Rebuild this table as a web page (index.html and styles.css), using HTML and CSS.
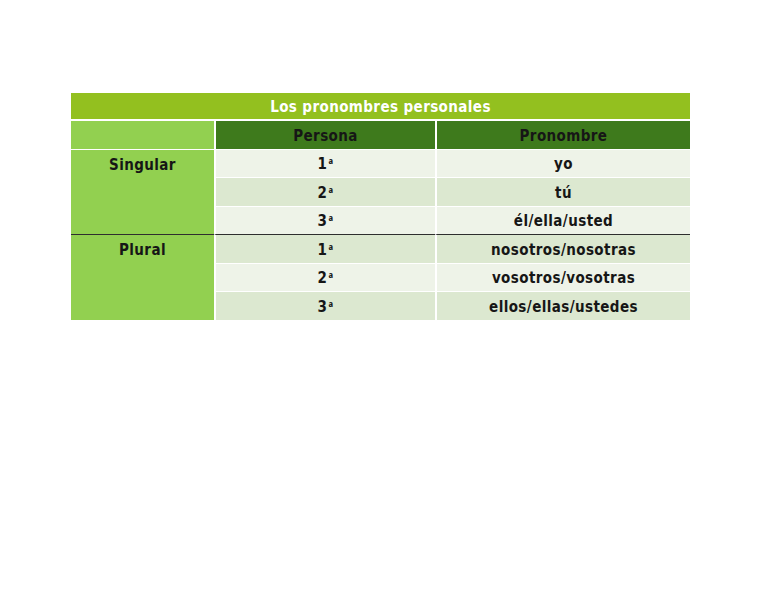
FILE: index.html
```html
<!DOCTYPE html>
<html lang="es">
<head>
<meta charset="utf-8">
<title>Los pronombres personales</title>
<link rel="stylesheet" href="styles.css">
</head>
<body>
<main class="page">
  <table class="pron">
    <colgroup>
      <col class="c1"><col class="c2"><col class="c3">
    </colgroup>
    <thead>
      <tr class="title"><th colspan="3">Los pronombres personales</th></tr>
      <tr class="head"><th class="blank"></th><th class="col">Persona</th><th class="col">Pronombre</th></tr>
    </thead>
    <tbody>
      <tr class="odd"><th rowspan="3" class="group last">Singular</th><td class="col">1<span class="ord">ª</span></td><td class="col">yo</td></tr>
      <tr class="even"><td class="col">2<span class="ord">ª</span></td><td class="col">tú</td></tr>
      <tr class="odd last"><td class="col">3<span class="ord">ª</span></td><td class="col">él/ella/usted</td></tr>
      <tr class="even"><th rowspan="3" class="group">Plural</th><td class="col">1<span class="ord">ª</span></td><td class="col">nosotros/nosotras</td></tr>
      <tr class="odd"><td class="col">2<span class="ord">ª</span></td><td class="col">vosotros/vosotras</td></tr>
      <tr class="even"><td class="col">3<span class="ord">ª</span></td><td class="col">ellos/ellas/ustedes</td></tr>
    </tbody>
  </table>
</main>
</body>
</html>
```
FILE: styles.css
```css
html, body {
  margin: 0;
  padding: 0;
  background: #ffffff;
}
.page {
  padding: 93px 0 0 71px;
}
.pron {
  border-collapse: separate;
  border-spacing: 0;
  width: 619px;
  table-layout: fixed;
  font-family: "DejaVu Sans Condensed", "DejaVu Sans", sans-serif;
  font-stretch: condensed;
  font-size: 15px;
  letter-spacing: 0.4px;
  color: #161616;
  text-align: center;
}
.c1 { width: 143px; }
.c2 { width: 221px; }
.pron th, .pron td {
  padding: 2px 0 0;
  height: 25.5px;
  font-weight: bold;
  border: 0 solid #ffffff;
  border-bottom-width: 1px;
  line-height: 18px;
}
.pron .col {
  border-left-width: 2px;
}
.title th {
  background: #93c01f;
  color: #ffffff;
  height: 25px;
  padding-top: 1px;
  border-bottom-width: 2px;
}
.head th {
  background: #3e7a1c;
}
.head th.blank {
  background: #92d050;
}
.pron th.group {
  background: #92d050;
  vertical-align: top;
  line-height: 28px;
  padding-top: 1px;
  border-bottom-width: 0;
}
.pron th.group.last {
  border-bottom: 1px solid #2e2e2e;
}
.ord {
  font-family: "Open Sans", "Noto Sans", sans-serif;
  font-size: 14px;
  margin-left: 1px;
}
.odd td { background: #eef3e8; }
.even td { background: #dce8d0; }
.pron tr.last td {
  border-bottom-color: #2e2e2e;
}
.pron tbody tr:last-child td {
  border-bottom-width: 0;
}
```
